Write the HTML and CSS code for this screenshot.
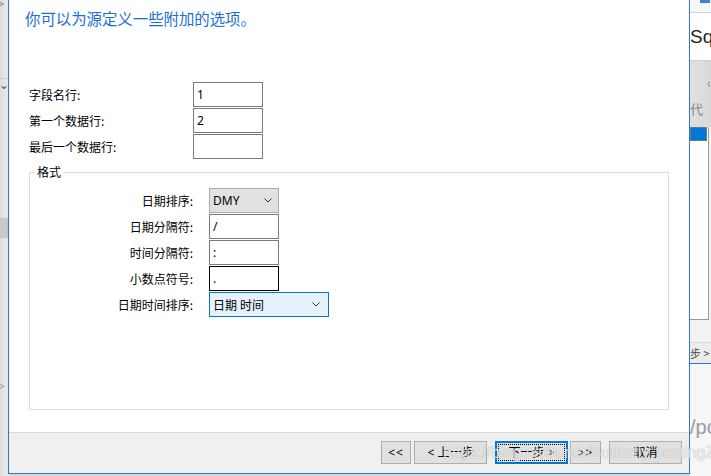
FILE: index.html
```html
<!DOCTYPE html>
<html lang="zh-CN">
<head>
    <meta charset="UTF-8">
    <title>导入向导 - 源选项</title>
    <link rel="stylesheet" href="styles.css">
</head>
<body>
<div class="desk">

    <!-- 左侧背景窗口 -->
    <div class="side-left">
        <div class="sl-top">&gt;</div>
        <div class="sl-line"></div>
        <div class="sl-check">&#8964;</div>
        <div class="sl-gap1"></div>
        <div class="sl-dark"></div>
        <div class="sl-gap2"></div>
        <div class="sl-arrow">&gt;</div>
    </div>

    <!-- 向导对话框 -->
    <div class="dialog">
        <div class="page">
            <h1 class="title">你可以为源定义一些附加的选项。</h1>

            <div class="rows">
                <label>字段名行:</label>
                <input type="text" class="txt" value="1">
                <label>第一个数据行:</label>
                <input type="text" class="txt" value="2">
                <label>最后一个数据行:</label>
                <input type="text" class="txt" value="">
            </div>

            <fieldset class="group">
                <legend>格式</legend>
                <div class="fmt">
                    <label>日期排序:</label>
                    <div class="combo">
                        <span>DMY</span>
                        <svg width="8" height="5" viewBox="0 0 8 5"><path d="M0.5 0.5 L4 4 L7.5 0.5" fill="none" stroke="#333" stroke-width="1"/></svg>
                    </div>
                    <label>日期分隔符:</label>
                    <input type="text" class="txt" value="/">
                    <label>时间分隔符:</label>
                    <input type="text" class="txt" value=":">
                    <label>小数点符号:</label>
                    <input type="text" class="txt focus" value=".">
                    <label>日期时间排序:</label>
                    <div class="combo wide active">
                        <span>日期 时间</span>
                        <svg width="8" height="5" viewBox="0 0 8 5"><path d="M0.5 0.5 L4 4 L7.5 0.5" fill="none" stroke="#333" stroke-width="1"/></svg>
                    </div>
                </div>
            </fieldset>
        </div>

        <div class="footer">
            <button class="btn narrow">&lt;&lt;</button>
            <button class="btn">&lt; 上一步</button>
            <button class="btn default">下一步 &gt;</button>
            <button class="btn narrow next">&gt;&gt;</button>
            <button class="btn cancel">取消</button>
        </div>
    </div>

    <!-- 右侧背景窗口 -->
    <div class="side-right">
        <div class="sr-top"><span class="sr-blue"></span></div>
        <div class="sr-head">Sq</div>
        <div class="sr-band">
            <span class="sr-mark">&lsaquo;</span>
            <span class="sr-col">代</span>
        </div>
        <div class="sr-list">
            <div class="sr-sel"></div>
        </div>
        <div class="sr-bar">步 &gt;</div>
        <div class="sr-bottom">/po</div>
    </div>

    <div class="watermark">https://blog.csdn.net/Butterfly_testingZ</div>
</div>
</body>
</html>
```

FILE: styles.css
```css
body { margin: 0; background: #e9e9e9; font-family: "Noto Sans", "Noto Sans CJK SC", sans-serif; font-size: 12px; color: #000; }
.desk { position: relative; display: flex; width: 711px; height: 476px; overflow: hidden; }

/* left background window */
.side-left { width: 8px; display: flex; flex-direction: column; background: linear-gradient(to right, #dcdcdc, #ececec); color: #777; overflow: hidden; }
.sl-top { height: 78px; font-size: 11px; line-height: 8px; margin-left: -2px; }
.sl-line { height: 1px; background: #cfcfcf; }
.sl-check { height: 18px; font-size: 12px; line-height: 12px; color: #555; margin-left: -1px; }
.sl-gap1 { height: 121px; }
.sl-dark { height: 20px; background: #c9c9c9; }
.sl-gap2 { height: 142px; }
.sl-arrow { font-size: 12px; line-height: 14px; color: #999; margin-left: -2px; }

/* dialog */
.dialog { width: 682px; height: 474px; box-sizing: border-box; border: 1px solid #2a7ad5; border-top: none; display: flex; flex-direction: column; box-shadow: 1px 1px 3px rgba(0,0,0,0.15); }
.page { height: 432px; background: #fff; padding: 8px 0 0 0; box-sizing: border-box; }
.title { margin: 0 0 0 16px; font-size: 15.4px; font-weight: normal; line-height: 20px; color: #1a6fd6; font-family: "Noto Sans CJK SC", sans-serif; }

.rows { display: grid; grid-template-columns: 164px 70px; grid-auto-rows: 25px; row-gap: 1px; margin: 54px 0 0 20px; }
.rows label, .fmt label { display: flex; align-items: center; font-family: "Noto Sans CJK SC", sans-serif; font-size: 12px; }
.fmt label { justify-content: flex-end; }

.txt { width: 70px; height: 25px; box-sizing: border-box; border: 1px solid #7a7a7a; padding: 0 3px; margin: 0; font-family: "Noto Sans", "Noto Sans CJK SC", sans-serif; font-size: 12px; color: #000; background: #fff; outline: none; }
.txt.focus { border-color: #000; }

.group { margin: 5px 0 0 20px; width: 640px; height: 246px; box-sizing: border-box; border: 1px solid #dcdcdc; padding: 0; }
.group legend { margin-left: 5px; padding: 0 2px; font-family: "Noto Sans CJK SC", sans-serif; font-size: 12px; line-height: 16px; }

.fmt { display: grid; grid-template-columns: 163px auto; column-gap: 16px; grid-auto-rows: 25px; row-gap: 1px; margin-top: 8px; justify-items: start; }
.fmt label { justify-self: stretch; }

.combo { width: 70px; height: 25px; box-sizing: border-box; border: 1px solid #adadad; background: #e1e1e1; display: flex; align-items: center; justify-content: space-between; padding: 0 6px 0 3px; }
.combo span { font-family: "Noto Sans", "Noto Sans CJK SC", sans-serif; font-size: 12px; }
.combo.wide { width: 120px; padding-right: 8px; }
.combo.active { background: #e5f1fb; border-color: #0078d7; }

/* footer */
.footer { flex: 1; background: #f0f0f0; border-top: 1px solid #dadada; display: flex; justify-content: flex-end; align-items: flex-start; padding: 8px 7px 0 0; }
.btn { height: 23px; width: 73px; box-sizing: border-box; border: 1px solid #adadad; background: #e1e1e1; font-family: "Noto Sans", "Noto Sans CJK SC", sans-serif; font-size: 12px; color: #000; padding: 0; margin-left: 3px; line-height: 19px; }
.btn.narrow { width: 30px; letter-spacing: 1px; }
.btn.default { border: 2px solid #0078d7; outline: 1px dotted #000; outline-offset: -4px; margin-left: 8px; }
.btn.next { width: 31px; margin-left: 2px; }
.btn.cancel { margin-left: 8px; }

/* right background window */
.side-right { flex: 1; display: flex; flex-direction: column; background: #f3f3f3; overflow: hidden; }
.sr-top { height: 12px; border-bottom: 1px solid #cfcfcf; background: #f7f7f7; position: relative; }
.sr-blue { display: block; margin-left: 10px; width: 10px; height: 3px; background: #3d7fd8; }
.sr-head { height: 47px; border-bottom: 1px solid #cfcfcf; background: #fff; font-family: "Liberation Sans", sans-serif; font-size: 19px; line-height: 48px; color: #222; margin-top: 0; }
.sr-band { height: 66px; background: linear-gradient(to right, #e0e0e0, #d9d9d9); position: relative; color: #888; font-family: "Noto Sans CJK SC", sans-serif; font-size: 13px; }
.sr-mark { display: block; padding: 17px 0 0 17px; line-height: 10px; }
.sr-col { display: block; padding: 15px 0 0 0; line-height: 12px; }
.sr-list { height: 192px; background: #fff; border-right: 1px solid #9a9a9a; border-bottom: 1px solid #9a9a9a; margin-right: 2px; }
.sr-sel { height: 12px; background: #0078d7; border: 1px dotted #c8783a; margin-right: 1px; }
.sr-bar { height: 20px; margin-top: 22px; border-top: 1px solid #dcdcdc; border-bottom: 1px solid #2a7ad5; background: #ececec; font-family: "Noto Sans CJK SC", sans-serif; font-size: 11px; line-height: 20px; color: #444; }
.sr-bottom { flex: 1; background: #f6f6f6; font-family: "Liberation Sans", sans-serif; font-size: 20px; color: #9a9a9a; padding-top: 52px; }

.watermark { position: absolute; left: 443px; top: 444px; font-family: "Liberation Sans", sans-serif; font-size: 16px; color: rgba(255,255,255,0.75); text-shadow: 0 0 1px rgba(80,80,80,0.5); white-space: nowrap; }
```
